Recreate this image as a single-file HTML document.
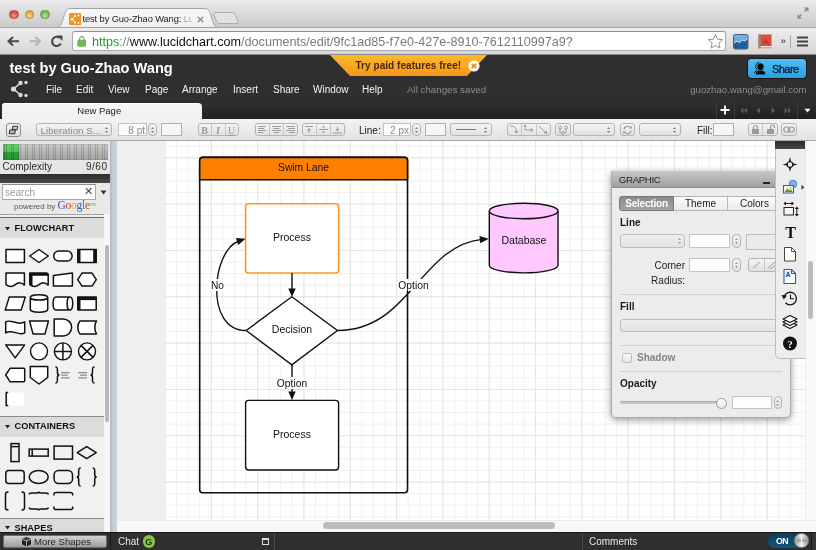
<!DOCTYPE html>
<html>
<head>
<meta charset="utf-8">
<title>test by Guo-Zhao Wang: Lucidchart</title>
<style>
html,body{margin:0;padding:0;}
body{width:816px;height:550px;overflow:hidden;position:relative;will-change:transform;background:#e9e9e9;font-family:"Liberation Sans","DejaVu Sans",sans-serif;font-size:11px;color:#222;}
.abs{position:absolute;}
div,span{box-sizing:border-box;}
/* ---------- browser chrome ---------- */
#tabstrip{left:0;top:0;width:816px;height:28px;background:linear-gradient(#ebebeb,#dddddd 40%,#c9c9c9);}
#navbar{left:0;top:27px;width:816px;height:28px;background:linear-gradient(#eeeeee,#d6d6d6);border-bottom:1px solid #8a8a8a;}
.tl{width:9.600px;height:9.600px;border-radius:5px;top:9.800px;}
#urlbox{left:72px;top:31.300px;width:653.5px;height:20.200px;background:#fff;border:1px solid #a9a9a9;border-top-color:#8f8f8f;border-radius:3px;}
#url{left:92px;top:34px;font-size:12.6px;line-height:16px;white-space:nowrap;color:#7a7a7a;letter-spacing:0px;}
/* ---------- app header ---------- */
#apphead{left:0;top:55px;width:816px;height:64px;background:#2f2f2f;}
#title{left:9.500px;top:58px;font-size:14.6px;font-weight:bold;color:#fff;white-space:nowrap;line-height:20px;}
.menu{top:82.700px;font-size:10px;color:#f2f2f2;line-height:14px;white-space:nowrap;}
#pagetab{left:2px;top:102.500px;width:200px;height:18px;background:linear-gradient(#f4f4f4,#f0f0f0);border-top:1px solid #fff;border-radius:2.500px 4px 0 0;}
#toolbar{left:0;top:119px;width:816px;height:22px;background:linear-gradient(#f3f3f3,#e3e3e3);border-bottom:1px solid #a8a8a8;}
.tb{height:13px;top:123px;border:1px solid #b4b4b4;border-radius:3px;background:linear-gradient(#f4f4f4,#e2e2e2);}
.tbw{height:13px;top:123px;border:1px solid #c4c4c4;background:#fbfbfb;}
/* ---------- left panel ---------- */
#left{left:0;top:141px;width:110px;height:392px;background:#ededed;}
.sec{left:0;width:104px;height:20px;background:#dcdcdc;border-top:1px solid #8a8a8a;font-weight:bold;font-size:9.2px;line-height:19px;color:#111;padding-left:14.5px;letter-spacing:0.05px;}
/* ---------- canvas ---------- */
#canvasbg{left:117px;top:141px;width:699px;height:392px;background:#efefef;}
#paper{left:164px;top:141px;width:641px;height:379px;background-color:#fff;
background-image:linear-gradient(90deg,#e5e5e5 1px,transparent 1px),linear-gradient(#e5e5e5 1px,transparent 1px),linear-gradient(90deg,#f0f0f0 1px,transparent 1px),linear-gradient(#f0f0f0 1px,transparent 1px);
background-size:46.34px 46.34px,46.34px 46.34px,11.585px 11.585px,11.585px 11.585px;background-position:0.5px 16.3px,0.5px 16.3px,0.5px 4.7px,0.5px 4.7px;}
/* ---------- bottom ---------- */
#bottom{left:0;top:531.500px;width:816px;height:18.500px;background:#2f2f2f;border-top:1px solid #1a1a1a;}
</style>
</head>
<body>
<!-- browser tab strip -->
<div id="tabstrip" class="abs"></div>
<div id="navbar" class="abs"></div>
<div class="abs" style="left:0;top:27px;width:816px;height:1px;background:#a8a8a8;"></div>
<div class="abs tl" style="left:9.200px;background:radial-gradient(circle at 50% 70%,#f7958a,#e4554a 55%,#c43c32);border:0.5px solid #a9463d;"></div>
<div class="abs tl" style="left:24.700px;background:radial-gradient(circle at 50% 70%,#fbd58a,#f0b040 55%,#d6962e);border:0.5px solid #b88a3a;"></div>
<div class="abs tl" style="left:40px;background:radial-gradient(circle at 50% 70%,#bfe59c,#7cc155 55%,#58a43a);border:0.5px solid #5c9444;"></div>
<svg class="abs" style="left:50px;top:0" width="210" height="28" viewBox="0 0 210 28">
  <defs><linearGradient id="tg" x1="0" y1="0" x2="0" y2="1"><stop offset="0" stop-color="#f7f7f7"/><stop offset="1" stop-color="#eeeeee"/></linearGradient></defs>
  <path d="M6 27.500 C10.500 27.500 11.500 24 13 19 C15 12 16 8.500 20.500 8.500 L154.500 8.500 C159 8.500 160 12 162 19 C163.500 24 164.500 27.500 169 27.500 Z" fill="url(#tg)" stroke="#a3a3a3" stroke-width="1"/>
  <path d="M165 12.5 L182 12.5 C184 12.5 185 13.500 185.500 15 L188 21 C188.500 22.500 188 23.500 186 23.500 L170 23.500 C168 23.500 167 22.500 166.500 21 L164 15 C163.500 13.500 163.500 12.500 165 12.500 Z" fill="#e2e2e2" stroke="#acacac" stroke-width="1"/>
</svg>
<!-- favicon -->
<svg class="abs" style="left:68.500px;top:12.500px" width="12.500" height="12.500" viewBox="0 0 13 13">
  <rect width="13" height="13" rx="1.5" fill="#f6921e"/>
  <g fill="#fff"><circle cx="3.2" cy="6.500" r="1.300"/><circle cx="6.200" cy="3.200" r="1.100"/><circle cx="6.200" cy="9.800" r="1.100"/><circle cx="9.800" cy="2.600" r="1"/><circle cx="9.800" cy="10.400" r="1"/></g>
  <path d="M3.200 6.500 L6.200 3.200 M3.200 6.500 L6.200 9.800" stroke="#fff" stroke-width="0.9"/>
</svg>
<div class="abs" style="left:82.500px;top:12.500px;font-size:9.300px;letter-spacing:-0.100px;line-height:13px;white-space:nowrap;color:#222;width:109px;overflow:hidden;">test by Guo-Zhao Wang: <span style="color:#aaa">Lu</span></div>
<svg class="abs" style="left:197px;top:15.500px" width="7" height="7" viewBox="0 0 7 7"><path d="M0.800 0.800 L6.200 6.200 M6.200 0.800 L0.800 6.200" stroke="#7a7a7a" stroke-width="1.200"/></svg>
<!-- fullscreen icon -->
<svg class="abs" style="left:796.500px;top:7px" width="12" height="12" viewBox="0 0 12 12"><path d="M7 0.500 L11.500 0.500 L11.500 5 Z M5 11.500 L0.500 11.500 L0.500 7 Z" fill="#8a8a8a"/><path d="M11 1 L7.500 4.500 M1 11 L4.500 7.500" stroke="#8a8a8a" stroke-width="1.400"/></svg>
<!-- nav buttons -->
<svg class="abs" style="left:6px;top:33px" width="62" height="17" viewBox="0 0 62 17">
  <path d="M13 8.300 L3 8.300 M7 4 L2.500 8.300 L7 12.600" stroke="#4a4a4a" stroke-width="2.100" fill="none"/>
  <path d="M23.500 8.300 L33.500 8.300 M29.500 4 L34 8.300 L29.500 12.600" stroke="#b4b4b4" stroke-width="2.100" fill="none"/>
  <path d="M53.800 5 A4.600 4.600 0 1 0 54.800 10.500" stroke="#4a4a4a" stroke-width="2.100" fill="none"/>
  <path d="M51 2.500 L56.500 2.500 L56.500 8 Z" fill="#4a4a4a"/>
</svg>
<div id="urlbox" class="abs"></div>
<!-- lock -->
<svg class="abs" style="left:76.500px;top:35px" width="9.500" height="12" viewBox="0 0 11 13"><path d="M3 6 V4 A2.500 2.500 0 0 1 8 4 V6" stroke="#8ea08a" stroke-width="1.400" fill="none"/><rect x="1" y="5.500" width="9" height="7" rx="1" fill="#6fbf4e" stroke="#4d9a34" stroke-width="0.800"/></svg>
<div id="url" class="abs"><span style="color:#1e9a2e">https</span>://<span style="color:#111">www.lucidchart.com</span>/documents/edit/9fc1ad85-f7e0-427e-8910-7612110997a9?</div>
<!-- star, extensions -->
<svg class="abs" style="left:707px;top:33px" width="17" height="17" viewBox="0 0 17 17"><path d="M8.500 1.500 L10.600 6.200 L15.700 6.700 L11.900 10.100 L13 15.100 L8.500 12.500 L4 15.100 L5.100 10.100 L1.300 6.700 L6.400 6.200 Z" fill="#fdfdfd" stroke="#858585" stroke-width="0.900" stroke-linejoin="round"/></svg>
<svg class="abs" style="left:733px;top:33.500px" width="16" height="16" viewBox="0 0 16 16"><defs><linearGradient id="bg1" x1="0" y1="0" x2="0" y2="1"><stop offset="0" stop-color="#7ab6e2"/><stop offset="1" stop-color="#4d94cc"/></linearGradient></defs><rect x="0.500" y="0.500" width="14.500" height="14.500" rx="1.800" fill="url(#bg1)" stroke="#3d4f66" stroke-width="0.900"/><path d="M1 9 L4 7 L6.500 8.500 L9.500 6 L12 7 L14.500 4.500 V13.500 Q14.500 14.500 13.500 14.500 H2 Q1 14.500 1 13.500 Z" fill="#1f5f96"/><path d="M1 9 L4 7 L6.500 8.500 L9.500 6 L12 7 L14.500 4.500" stroke="#e8f4ff" stroke-width="0.900" fill="none"/></svg>
<svg class="abs" style="left:757.500px;top:33.500px" width="14" height="16" viewBox="0 0 14 16"><rect x="0.500" y="0.500" width="13" height="12.500" fill="#e04a3c"/><rect x="0.500" y="0.500" width="2.300" height="14" fill="#8a8a8a"/><rect x="2.800" y="12" width="10.700" height="2.500" fill="#f4ece4"/><path d="M2.800 13.800 H13.500" stroke="#d84a3c" stroke-width="0.700"/><path d="M0.500 13 L2.500 15.500 L0.500 15.500 Z" fill="#f0c030"/><text x="8" y="10.500" font-size="9.500" font-weight="bold" text-anchor="middle" fill="#b8362a" font-family="Liberation Sans,sans-serif">A</text></svg>
<div class="abs" style="left:780.500px;top:34px;font-size:9.500px;line-height:14px;color:#555;font-weight:bold;">»</div>
<div class="abs" style="left:789.500px;top:35px;width:1px;height:13px;background:#aaa;"></div>
<svg class="abs" style="left:796px;top:35px" width="13" height="13" viewBox="0 0 13 13"><path d="M1 2.500 H12 M1 6.500 H12 M1 10.500 H12" stroke="#444" stroke-width="2.200"/></svg>

<!-- app header -->
<div id="apphead" class="abs"></div>
<div id="title" class="abs">test by Guo-Zhao Wang</div>
<!-- promo banner -->
<svg class="abs" style="left:326px;top:55px" width="170" height="24" viewBox="326 55 170 24">
  <defs><linearGradient id="og" x1="0" y1="0" x2="0" y2="1"><stop offset="0" stop-color="#fdb92a"/><stop offset="1" stop-color="#f7961a"/></linearGradient></defs>
  <path d="M330 55 L487 55 L467 76 L350 76 Z" fill="url(#og)"/>
  <circle cx="474" cy="66" r="5.600" fill="#fff"/>
  <path d="M471.800 63.800 L476.200 68.200 M476.200 63.800 L471.800 68.200" stroke="#f08a10" stroke-width="1.700"/>
</svg>
<div class="abs" style="left:355.500px;top:59px;font-size:10px;line-height:14px;font-weight:bold;color:#47290a;white-space:nowrap;letter-spacing:0.050px;">Try paid features free!</div>
<!-- share button -->
<div class="abs" style="left:747px;top:57.700px;width:60.200px;height:21.400px;border-radius:4px;background:linear-gradient(#50bef3,#2c9fe1);border:1px solid #161616;"></div>
<svg class="abs" style="left:752px;top:61px" width="16" height="15" viewBox="752 61 16 15"><path d="M757.300 69.500 A3.700 3.900 0 0 1 759.200 62.400" fill="none" stroke="#0a0a0a" stroke-width="0.900"/><path d="M757 70.200 L754 72.800" stroke="#0a0a0a" stroke-width="1"/><ellipse cx="760.500" cy="66.800" rx="3.100" ry="3.500" fill="#0a0a0a"/><path d="M755.800 74.600 C755.800 71.300 757.800 70.600 760.500 70.600 C763.200 70.600 765.300 71.300 765.300 74.600 Z" fill="#0a0a0a"/></svg>
<div class="abs" style="left:772px;top:61.700px;font-size:11px;line-height:14px;color:#0b2238;white-space:nowrap;letter-spacing:-0.550px;-webkit-text-stroke:0.350px #0b2238;">Share</div>
<!-- menu -->
<svg class="abs" style="left:10px;top:80px" width="19" height="18" viewBox="0 0 19 18"><g fill="#d8d8d8"><circle cx="3.500" cy="9" r="2.600"/><circle cx="10.500" cy="3" r="2.200"/><circle cx="10.500" cy="15" r="2.200"/><circle cx="16" cy="2.500" r="1.700"/><circle cx="16" cy="15.500" r="1.700"/></g><path d="M3.500 9 L10.500 3 M3.500 9 L10.500 15" stroke="#d8d8d8" stroke-width="1.600"/></svg>
<div class="abs menu" style="left:46px">File</div>
<div class="abs menu" style="left:76px">Edit</div>
<div class="abs menu" style="left:108px">View</div>
<div class="abs menu" style="left:145px">Page</div>
<div class="abs menu" style="left:182px">Arrange</div>
<div class="abs menu" style="left:233px">Insert</div>
<div class="abs menu" style="left:273px">Share</div>
<div class="abs menu" style="left:313px">Window</div>
<div class="abs menu" style="left:362px">Help</div>
<div class="abs menu" style="left:407px;color:#8d8d8d;font-size:9.750px;">All changes saved</div>
<div class="abs menu" style="right:9.500px;color:#8d8d8d;font-size:9.650px;">guozhao.wang@gmail.com</div>
<!-- page tab -->
<div class="abs" style="left:0;top:99px;width:816px;height:20.500px;background:linear-gradient(#2f2f2f,#2b2b2b 40%,#202020);"></div>
<div class="abs" style="left:715.500px;top:102px;width:1px;height:17px;background:#3c3c3c;"></div><div class="abs" style="left:734px;top:102px;width:1px;height:17px;background:#3c3c3c;"></div><div class="abs" style="left:797px;top:102px;width:1px;height:17px;background:#3c3c3c;"></div>
<div id="pagetab" class="abs"></div>
<div class="abs" style="left:0;top:104px;width:198.500px;text-align:center;font-size:9.500px;line-height:14px;color:#222;">New Page</div>
<svg class="abs" style="left:720px;top:105px" width="10" height="10" viewBox="0 0 10 10"><path d="M5 0.500 V9.500 M0.500 5 H9.500" stroke="#fff" stroke-width="1.900"/></svg>
<svg class="abs" style="left:738px;top:105px" width="78" height="11" viewBox="738 105 78 11">
  <g fill="#5c5c5c"><path d="M743.500 107.500 V113.500 L740.500 110.500 Z M747 107.500 V113.500 L744 110.500 Z"/><path d="M760 107.500 V113.500 L756.500 110.500 Z"/><path d="M771.500 107.500 V113.500 L775 110.500 Z"/><path d="M784.500 107.500 V113.500 L787.500 110.500 Z M788 107.500 V113.500 L791 110.500 Z"/></g>
  <path d="M804.500 108.800 H810.500 L807.500 112.500 Z" fill="#fff"/>
</svg>
<!-- toolbar -->
<div id="toolbar" class="abs"></div>


<!-- toolbar controls -->
<div class="abs tb" style="left:6.300px;top:123px;width:14.500px;height:13.500px;border-color:#8a8a8a;border-radius:3px;"></div>
<svg class="abs" style="left:8px;top:125px" width="11" height="10" viewBox="8 125 11 10"><path d="M12.800 126.200 H17.800 L17.200 129.800 H12.200 Z" fill="#c4c4c4" stroke="#222" stroke-width="0.900"/><path d="M9.800 129.900 H15.400 L14.800 133.800 H9.200 Z" fill="#b4b4b4" stroke="#222" stroke-width="0.900"/></svg>
<div class="abs tb" style="left:36px;width:76px;"></div>
<div class="abs" style="left:40.500px;top:123.600px;font-size:9.800px;line-height:13px;color:#8c8c8c;white-space:nowrap;">Liberation S...</div>
<svg class="abs updn" style="left:104px;top:126px" width="5" height="8" viewBox="0 0 5 8"><path d="M1 3 L2.500 1 L4 3 Z M1 5 L2.500 7 L4 5 Z" fill="#7d7d7d"/></svg>
<div class="abs tbw" style="left:118px;width:29px;"></div>
<div class="abs" style="left:118px;top:123.600px;width:27px;text-align:right;font-size:10px;line-height:13px;color:#8c8c8c;white-space:nowrap;">8 pt</div>
<div class="abs tb" style="left:148px;width:9px;border-radius:4px;"></div>
<svg class="abs" style="left:150px;top:126px" width="5" height="8" viewBox="0 0 5 8"><path d="M1 3 L2.500 1 L4 3 Z M1 5 L2.500 7 L4 5 Z" fill="#7d7d7d"/></svg>
<div class="abs tbw" style="left:161px;width:21px;background:#f6f6f6;border-color:#b0b0b0;"></div>
<div class="abs tb" style="left:197.500px;width:41px;"></div>
<div class="abs" style="left:211px;top:124px;width:1px;height:11px;background:#c4c4c4;"></div>
<div class="abs" style="left:224.500px;top:124px;width:1px;height:11px;background:#c4c4c4;"></div>
<div class="abs" style="left:197.500px;top:123.500px;width:14px;text-align:center;font-family:'Liberation Serif',serif;font-weight:bold;font-size:10px;line-height:13px;color:#9a9a9a;">B</div>
<div class="abs" style="left:211px;top:123.500px;width:14px;text-align:center;font-family:'Liberation Serif',serif;font-style:italic;font-weight:bold;font-size:10px;line-height:13px;color:#9a9a9a;">I</div>
<div class="abs" style="left:224.500px;top:123.500px;width:14px;text-align:center;font-family:'Liberation Serif',serif;font-size:10px;line-height:13px;color:#9a9a9a;text-decoration:underline;">U</div>
<div class="abs tb" style="left:255px;width:43px;"></div>
<div class="abs" style="left:269px;top:124px;width:1px;height:11px;background:#c4c4c4;"></div>
<div class="abs" style="left:283px;top:124px;width:1px;height:11px;background:#c4c4c4;"></div>
<svg class="abs" style="left:255px;top:123px" width="43" height="13" viewBox="0 0 43 13"><g stroke="#9a9a9a" stroke-width="1"><path d="M3 3.500 H11 M3 5.500 H9 M3 7.500 H11 M3 9.500 H8"/><path d="M17 3.500 H26 M18.500 5.500 H24.500 M17 7.500 H26 M19 9.500 H24"/><path d="M31 3.500 H40 M33 5.500 H40 M31 7.500 H40 M34 9.500 H40"/></g></svg>
<div class="abs tb" style="left:302px;width:43px;"></div>
<div class="abs" style="left:316px;top:124px;width:1px;height:11px;background:#c4c4c4;"></div>
<div class="abs" style="left:330px;top:124px;width:1px;height:11px;background:#c4c4c4;"></div>
<svg class="abs" style="left:302px;top:123px" width="43" height="13" viewBox="0 0 43 13"><g stroke="#9a9a9a" stroke-width="1" fill="#9a9a9a"><path d="M3 3.500 H11"/><path d="M7 5 L9 7.500 H7.500 V10 H6.500 V7.500 H5 Z" stroke="none"/><path d="M17 6.500 H26"/><path d="M21.500 2.500 L23 4.500 H20 Z M21.500 10.500 L23 8.500 H20 Z" stroke="none"/><path d="M31 10 H40"/><path d="M35.500 8.500 L37.500 6 H36 V3.500 H35 V6 H33.500 Z" stroke="none"/></g></svg>
<div class="abs" style="left:359px;top:123.600px;font-size:10px;line-height:13px;color:#222;white-space:nowrap;">Line:</div>
<div class="abs tbw" style="left:383px;width:28px;"></div>
<div class="abs" style="left:383px;top:123.600px;width:26px;text-align:right;font-size:10px;line-height:13px;color:#8c8c8c;white-space:nowrap;">2 px</div>
<div class="abs tb" style="left:412px;width:9px;border-radius:4px;"></div>
<svg class="abs" style="left:414px;top:126px" width="5" height="8" viewBox="0 0 5 8"><path d="M1 3 L2.500 1 L4 3 Z M1 5 L2.500 7 L4 5 Z" fill="#7d7d7d"/></svg>
<div class="abs tbw" style="left:425px;width:21px;background:#f6f6f6;border-color:#b0b0b0;"></div>
<div class="abs tb" style="left:450px;width:42px;"></div>
<div class="abs" style="left:456px;top:129px;width:20px;height:1px;background:#777;"></div>
<svg class="abs" style="left:483px;top:126px" width="5" height="8" viewBox="0 0 5 8"><path d="M1 3 L2.500 1 L4 3 Z M1 5 L2.500 7 L4 5 Z" fill="#7d7d7d"/></svg>
<div class="abs tb" style="left:507px;width:44px;"></div>
<div class="abs" style="left:521px;top:124px;width:1px;height:11px;background:#c4c4c4;"></div>
<div class="abs" style="left:536px;top:124px;width:1px;height:11px;background:#c4c4c4;"></div>
<svg class="abs" style="left:507px;top:123px" width="44" height="13" viewBox="0 0 44 13"><g stroke="#9a9a9a" stroke-width="1" fill="none"><path d="M3 3 C8 3 9.500 5 9.500 9.500"/><path d="M7.500 8 L9.500 10.500 L11.500 8 Z" fill="#9a9a9a" stroke="none"/><path d="M18 3 V7 H25"/><path d="M24 5 L26.500 7 L24 9 Z M16 3.500 L18 1.500 L20 3.500" fill="#9a9a9a" stroke="none"/><path d="M32 3 L39 10"/><path d="M40.500 11 L37 10.300 L39.700 7.500 Z" fill="#9a9a9a" stroke="none"/></g></svg>
<div class="abs tb" style="left:555px;width:16px;"></div>
<svg class="abs" style="left:557px;top:125px" width="12" height="10" viewBox="0 0 12 10"><g stroke="#9a9a9a" stroke-width="1" fill="none"><circle cx="3" cy="2.500" r="1.500"/><circle cx="9" cy="2.500" r="1.500"/><circle cx="6" cy="8" r="1.500"/><path d="M3 4 V8.500 M9 4 V8.500"/></g></svg>
<div class="abs tb" style="left:573px;width:42px;"></div>
<svg class="abs" style="left:606px;top:126px" width="5" height="8" viewBox="0 0 5 8"><path d="M1 3 L2.500 1 L4 3 Z M1 5 L2.500 7 L4 5 Z" fill="#7d7d7d"/></svg>
<div class="abs tb" style="left:620px;width:15px;"></div>
<svg class="abs" style="left:622px;top:125px" width="11" height="10" viewBox="0 0 11 10"><g stroke="#9a9a9a" stroke-width="1.100" fill="none"><path d="M2 4.500 A3.500 3.500 0 0 1 8.500 3"/><path d="M9 5.500 A3.500 3.500 0 0 1 2.500 7"/></g><path d="M7 3.500 L10 3.500 L9.500 0.800 Z M4 6.500 L1 6.500 L1.500 9.200 Z" fill="#9a9a9a"/></svg>
<div class="abs tb" style="left:639px;width:42px;"></div>
<svg class="abs" style="left:672px;top:126px" width="5" height="8" viewBox="0 0 5 8"><path d="M1 3 L2.500 1 L4 3 Z M1 5 L2.500 7 L4 5 Z" fill="#7d7d7d"/></svg>
<div class="abs" style="left:697px;top:123.600px;font-size:10px;line-height:13px;color:#222;white-space:nowrap;">Fill:</div>
<div class="abs tbw" style="left:713px;width:21px;background:#f6f6f6;border-color:#b0b0b0;"></div>
<div class="abs tb" style="left:748px;width:30px;"></div>
<div class="abs" style="left:762px;top:124px;width:1px;height:11px;background:#c4c4c4;"></div>
<svg class="abs" style="left:748px;top:123px" width="30" height="13" viewBox="0 0 30 13"><g fill="#9a9a9a"><rect x="4" y="6" width="7" height="5" rx="0.500"/><rect x="19" y="6" width="7" height="5" rx="0.500"/></g><g stroke="#9a9a9a" stroke-width="1.200" fill="none"><path d="M5.500 6 V4.500 A2 2 0 0 1 9.500 4.500 V6"/><path d="M22.500 6 V4 A2 2 0 0 1 26.500 4 V5"/></g></svg>
<div class="abs tb" style="left:781px;width:16px;"></div>
<svg class="abs" style="left:783px;top:126px" width="12" height="7" viewBox="0 0 12 7"><g stroke="#9a9a9a" stroke-width="1.200" fill="none"><rect x="0.800" y="1" width="6" height="5" rx="2.500"/><rect x="5.200" y="1" width="6" height="5" rx="2.500"/></g></svg>

<!-- canvas area -->
<div id="canvasbg" class="abs"></div>
<div id="paper" class="abs"></div>


<!-- diagram -->
<svg class="abs" style="left:117px;top:141px;font-family:'Liberation Sans',sans-serif;" width="699" height="392" viewBox="117 141 699 392">
  <!-- swim lane -->
  <rect x="199.700" y="157.400" width="207.800" height="335.400" rx="3" fill="none" stroke="#111" stroke-width="1.600"/>
  <path d="M199.700 179.700 V160.400 Q199.700 157.400 202.700 157.400 H404.500 Q407.500 157.400 407.500 160.400 V179.700 Z" fill="#ff8000" stroke="#111" stroke-width="1.600"/>
  <text x="303.500" y="171.300" font-size="10.300" text-anchor="middle" fill="#111">Swim Lane</text>
  <!-- process 1 -->
  <rect x="245.600" y="203.700" width="93" height="69.300" rx="3" fill="#fff" stroke="#ff9622" stroke-width="1.600"/>
  <text x="292" y="241" font-size="10.500" text-anchor="middle" fill="#111">Process</text>
  <!-- arrow p1->decision -->
  <path d="M292 273 V290" stroke="#111" stroke-width="1.400" fill="none"/>
  <path d="M288.300 288.500 L292 297 L295.700 288.500 Z" fill="#111"/>
  <!-- decision -->
  <path d="M246.200 330.500 L291.800 296.800 L337.400 330.500 L291.800 364.800 Z" fill="#fff" stroke="#111" stroke-width="1.400" stroke-linejoin="miter"/>
  <text x="292" y="333.300" font-size="10.500" text-anchor="middle" fill="#111">Decision</text>
  <!-- No curve -->
  <path d="M246.200 330.500 C204 330.500 212 250 239 241" stroke="#111" stroke-width="1.400" fill="none"/>
  <path d="M-9 -3.700 L0 0 L-9 3.700 Z" fill="#111" transform="translate(245.600 238.800) rotate(-18)"/>
  <rect x="210.500" y="279" width="14" height="12" fill="#fff"/>
  <text x="217.500" y="289" font-size="10.200" text-anchor="middle" fill="#111">No</text>
  <!-- Option curve -->
  <path d="M337.400 330.500 C410 330.500 420 246 482 239.400" stroke="#111" stroke-width="1.400" fill="none"/>
  <path d="M-9 -3.700 L0 0 L-9 3.700 Z" fill="#111" transform="translate(488.800 238.700) rotate(-6)"/>
  <rect x="399" y="279" width="29" height="12" fill="#fff"/>
  <text x="413.500" y="289" font-size="10.300" text-anchor="middle" fill="#111">Option</text>
  <!-- arrow decision->p2 -->
  <path d="M292 365 V393" stroke="#111" stroke-width="1.400" fill="none"/>
  <path d="M288.300 391.500 L292 400 L295.700 391.500 Z" fill="#111"/>
  <rect x="277" y="377" width="30" height="12" fill="#fff"/>
  <text x="292" y="387.300" font-size="10.300" text-anchor="middle" fill="#111">Option</text>
  <!-- process 2 -->
  <rect x="245.600" y="400.400" width="93" height="69.600" rx="3" fill="#fff" stroke="#111" stroke-width="1.400"/>
  <text x="292" y="437.500" font-size="10.500" text-anchor="middle" fill="#111">Process</text>
  <!-- database -->
  <path d="M489.300 211 V265.200 A34.350 7.700 0 0 0 558 265.200 V211 A34.350 7.700 0 0 0 489.300 211 Z" fill="#ffc9ff" stroke="#111" stroke-width="1.400"/>
  <path d="M489.300 211 A34.350 7.700 0 0 0 558 211" fill="none" stroke="#111" stroke-width="1.400"/>
  <text x="524" y="244" font-size="10.500" text-anchor="middle" fill="#111">Database</text>
</svg>
<!-- scrollbars -->
<div class="abs" style="left:117px;top:520px;width:699px;height:13px;background:#f7f7f7;border-top:1px solid #ebebeb;"></div>
<div class="abs" style="left:323px;top:522px;width:232px;height:7px;border-radius:4px;background:#bcbcbc;"></div>
<div class="abs" style="left:805px;top:141px;width:11px;height:379px;background:#f9f9f9;border-left:1px solid #ebebeb;"></div>
<div class="abs" style="left:808.300px;top:260.500px;width:5px;height:58px;border-radius:3px;background:#bcbcbc;"></div>


<!-- graphic panel -->
<div class="abs" style="left:610.800px;top:170.700px;width:179.800px;height:247px;background:#ececec;border:1px solid #a9a9a9;border-radius:1px 1px 5px 5px;box-shadow:0 2px 7px rgba(0,0,0,0.400);"></div>
<div class="abs" style="left:611.500px;top:171.300px;width:178.300px;height:16.700px;background:linear-gradient(#c8c8c8,#a0a0a0);border-bottom:1px solid #8a8a8a;"></div>
<div class="abs" style="left:618.800px;top:172.600px;font-size:9.700px;letter-spacing:-0.350px;line-height:14px;color:#222;">GRAPHIC</div>
<div class="abs" style="left:763px;top:182px;width:7px;height:2px;background:#222;"></div>
<div class="abs" style="left:619px;top:196px;width:163px;height:15px;border:1px solid #b4b4b4;border-radius:3px;background:linear-gradient(#fcfcfc,#ebebeb);"></div>
<div class="abs" style="left:619px;top:196px;width:55px;height:15px;border:1px solid #777;border-radius:3px 0 0 3px;background:linear-gradient(#8b8b8b,#a3a3a3);"></div>
<div class="abs" style="left:727px;top:197px;width:1px;height:13px;background:#b9b9b9;"></div>
<div class="abs" style="left:619px;top:197px;width:55px;text-align:center;font-size:10px;line-height:13px;font-weight:bold;color:#fff;letter-spacing:-0.200px;">Selection</div>
<div class="abs" style="left:674px;top:197px;width:53px;text-align:center;font-size:10px;line-height:13px;color:#222;">Theme</div>
<div class="abs" style="left:728px;top:197px;width:53px;text-align:center;font-size:10px;line-height:13px;color:#222;">Colors</div>
<div class="abs" style="left:620px;top:216px;font-size:10px;line-height:13px;font-weight:bold;color:#1a1a1a;">Line</div>
<div class="abs tb" style="left:620px;top:234px;width:65px;height:14px;background:linear-gradient(#efefef,#e2e2e2);border-color:#bdbdbd;"></div>
<svg class="abs" style="left:677px;top:237px" width="5" height="8" viewBox="0 0 5 8"><path d="M1 3 L2.500 1 L4 3 Z M1 5 L2.500 7 L4 5 Z" fill="#9a9a9a"/></svg>
<div class="abs tbw" style="left:689px;top:234px;width:41px;height:14px;background:#fdfdfd;"></div>
<div class="abs tb" style="left:732px;top:234px;width:9px;height:14px;border-radius:4px;"></div>
<svg class="abs" style="left:734px;top:237px" width="5" height="8" viewBox="0 0 5 8"><path d="M1 3 L2.500 1 L4 3 Z M1 5 L2.500 7 L4 5 Z" fill="#9a9a9a"/></svg>
<div class="abs tbw" style="left:746px;top:234px;width:36px;height:16px;background:#ebebeb;border-color:#bcbcbc;"></div>
<div class="abs" style="left:630px;top:259px;width:55px;text-align:right;font-size:10px;line-height:14.500px;color:#222;">Corner Radius:</div>
<div class="abs tbw" style="left:689px;top:258px;width:41px;height:14px;background:#fdfdfd;"></div>
<div class="abs tb" style="left:732px;top:258px;width:9px;height:14px;border-radius:4px;"></div>
<svg class="abs" style="left:734px;top:261px" width="5" height="8" viewBox="0 0 5 8"><path d="M1 3 L2.500 1 L4 3 Z M1 5 L2.500 7 L4 5 Z" fill="#9a9a9a"/></svg>
<div class="abs tb" style="left:748px;top:258px;width:34px;height:14px;"></div>
<svg class="abs" style="left:748px;top:258px" width="34" height="14" viewBox="0 0 34 14"><path d="M16.500 1 V13" stroke="#c4c4c4"/><path d="M5 10 L12 4 M20 10 L27 4 M22 11.500 L29 5.500" stroke="#9a9a9a" stroke-width="1"/></svg>
<div class="abs" style="left:620px;top:294px;width:162px;height:1px;background:#cfcfcf;"></div>
<div class="abs" style="left:620px;top:300px;font-size:10px;line-height:13px;font-weight:bold;color:#1a1a1a;">Fill</div>
<div class="abs tb" style="left:620px;top:319px;width:162px;height:13px;background:linear-gradient(#ededed,#e2e2e2);border-color:#bdbdbd;"></div>
<div class="abs" style="left:620px;top:345px;width:162px;height:1px;background:#cfcfcf;"></div>
<div class="abs" style="left:622px;top:353px;width:10px;height:10px;border:1px solid #bdbdbd;border-radius:2px;background:linear-gradient(#fafafa,#e6e6e6);"></div>
<div class="abs" style="left:637px;top:351px;font-size:10px;line-height:13px;font-weight:bold;color:#858585;">Shadow</div>
<div class="abs" style="left:620px;top:371px;width:162px;height:1px;background:#cfcfcf;"></div>
<div class="abs" style="left:620px;top:377px;font-size:10px;line-height:13px;font-weight:bold;color:#1a1a1a;">Opacity</div>
<div class="abs" style="left:620px;top:401px;width:101px;height:3px;border-radius:2px;background:#c9c9c9;border-top:1px solid #aaa;"></div>
<div class="abs" style="left:716px;top:397.500px;width:11px;height:11px;border-radius:6px;border:1px solid #9c9c9c;background:linear-gradient(#ffffff,#e9e9e9);"></div>
<div class="abs tbw" style="left:731.500px;top:396px;width:40px;height:13px;background:#fdfdfd;"></div>
<div class="abs tb" style="left:773.500px;top:396px;width:8.500px;height:13px;border-radius:4px;"></div>
<svg class="abs" style="left:775.300px;top:398.500px" width="5" height="8" viewBox="0 0 5 8"><path d="M1 3 L2.500 1 L4 3 Z M1 5 L2.500 7 L4 5 Z" fill="#9a9a9a"/></svg>

<!-- right dock -->
<div class="abs" style="left:775px;top:141px;width:30px;height:217.500px;background:#ededed;border-left:1px solid #bdbdbd;border-bottom:1px solid #bdbdbd;border-radius:0 0 0 5px;"></div>
<div class="abs" style="left:775px;top:141px;width:30px;height:7.500px;background:linear-gradient(#2c2c2c,#484848);"></div>
<svg class="abs" style="left:776px;top:149px;font-family:'Liberation Serif',serif;" width="34" height="210" viewBox="776 149 34 210">
  <!-- crosshair -->
  <g stroke="#111" fill="none" stroke-width="1.100"><circle cx="790" cy="164.500" r="2.800"/></g><path d="M790 157 L791.200 161.800 H788.800 Z M790 172 L791.200 167.200 H788.800 Z M782.500 164.500 L787.300 163.300 V165.700 Z M797.500 164.500 L792.700 163.300 V165.700 Z" fill="#111"/>
  <!-- image -->
  <circle cx="793" cy="184" r="3.800" fill="#7fb2e6" stroke="#3f6ea8" stroke-width="0.800"/>
  <rect x="783.500" y="185.500" width="10" height="7.500" fill="#f4f7ea" stroke="#2f5f9c" stroke-width="1"/>
  <path d="M784.500 192 L787.500 188.500 L789.500 190.500 L791 189 L792.500 192 Z" fill="#4c9a3a"/>
  <circle cx="790.500" cy="187.800" r="0.900" fill="#e8b020"/>
  <path d="M801.500 184.800 V189.800 L804.300 187.300 Z" fill="#333"/>
  <!-- resize -->
  <g stroke="#222" fill="none" stroke-width="1"><rect x="784" y="207.500" width="9.500" height="7.500" fill="#f8f8f8"/><path d="M784.500 203.500 H793 M796.800 208 V215"/></g>
  <path d="M783.500 203.500 L786 201.500 V205.500 Z M794 203.500 L791.500 201.500 V205.500 Z M796.800 206.500 L794.800 209 H798.800 Z M796.800 216.500 L794.800 214 H798.800 Z" fill="#111"/>
  <!-- T -->
  <text x="790.500" y="237.500" font-size="16" font-weight="bold" text-anchor="middle" fill="#111">T</text>
  <!-- page -->
  <path d="M784.500 247.500 H791.500 L795.500 251.500 V261 H784.500 Z" fill="#fff" stroke="#444" stroke-width="1" stroke-linejoin="round"/>
  <path d="M791.500 247.500 V251.500 H795.500" fill="none" stroke="#444" stroke-width="0.900"/>
  <!-- doc A -->
  <path d="M784 269.500 H791.500 L795.500 273.500 V283.500 H784 Z" fill="#fff" stroke="#2a5aa8" stroke-width="1.100" stroke-linejoin="round"/>
  <path d="M791.500 269.500 V273.500 H795.500" fill="none" stroke="#2a5aa8" stroke-width="1"/>
  <rect x="785" y="271" width="6" height="6" fill="#d7e6f7"/>
  <text x="788" y="276.800" font-size="6.500" font-weight="bold" text-anchor="middle" fill="#1c3f7c" font-family="Liberation Sans,sans-serif">A</text>
  <!-- history -->
  <g stroke="#111" fill="none" stroke-width="1.300"><path d="M784.200 296.500 A6.300 6.300 0 1 1 785.500 302.800"/><path d="M790.500 294.500 V298.800 H794" stroke-width="1.100"/></g>
  <path d="M781.500 295 L787 295.500 L783.800 299.500 Z" fill="#111"/>
  <!-- layers -->
  <g stroke="#111" fill="#fff" stroke-width="1.100" stroke-linejoin="round"><path d="M783 325 L790 328.500 L797 325 L790 321.500 Z"/><path d="M783 322 L790 325.500 L797 322 L790 318.500 Z"/><path d="M783 319 L790 322.500 L797 319 L790 315.500 Z"/></g>
  <!-- help -->
  <circle cx="790" cy="343.500" r="7" fill="#111"/>
  <text x="790" y="347.500" font-size="10.500" font-weight="bold" text-anchor="middle" fill="#fff">?</text>
</svg>

<!-- left panel -->
<div id="left" class="abs"></div>
<!-- left panel contents -->
<div class="abs" style="left:0;top:141px;width:110px;height:33px;background:#e6e6e6;"></div>
<div class="abs" style="left:2.500px;top:143.500px;width:105px;height:16.200px;background:linear-gradient(#cdcdcd,#b4b4b4 50%,#a6a6a6);"></div>
<div class="abs" style="left:2.500px;top:143.500px;width:16.200px;height:16.200px;background:linear-gradient(#6bd070 0,#55c05e 50%,#2f9e3c 50%,#2a9436 100%);"></div>
<div class="abs" style="left:2.500px;top:143.500px;width:105px;height:16.200px;background:repeating-linear-gradient(90deg,rgba(0,0,0,0) 0,rgba(0,0,0,0) 1.250px,rgba(0,0,0,0.160) 1.250px,rgba(0,0,0,0.160) 1.750px);box-shadow:inset 0 0 0 0.500px rgba(0,0,0,0.200);"></div>
<div class="abs" style="left:2.500px;top:159.700px;font-size:10px;line-height:13px;color:#2a2a2a;">Complexity</div>
<div class="abs" style="left:60px;top:159.700px;width:47.500px;text-align:right;font-size:10px;line-height:13px;color:#2a2a2a;letter-spacing:0.500px;">9/60</div>
<div class="abs" style="left:0;top:174px;width:110px;height:9px;background:linear-gradient(#2c2c2c,#4a4a4a);"></div>
<div class="abs" style="left:0;top:183px;width:110px;height:31px;background:#e9e9e9;"></div>
<div class="abs" style="left:2px;top:184px;width:94px;height:16px;background:#fff;border:1px solid #a6a6a6;border-top-color:#8c8c8c;"></div>
<div class="abs" style="left:5px;top:187px;font-size:10px;line-height:12px;color:#999;">search</div>
<div class="abs" style="left:84px;top:185px;font-size:11px;line-height:13px;color:#444;">✕</div>
<svg class="abs" style="left:100px;top:190px" width="7" height="5" viewBox="0 0 7 5"><path d="M0.500 0.500 H6.500 L3.500 4.500 Z" fill="#333"/></svg>
<div class="abs" style="left:14px;top:199px;font-size:8px;line-height:12px;color:#555;white-space:nowrap;">powered by <span style="font-family:'Liberation Serif',serif;font-size:11.500px;letter-spacing:-0.300px;"><span style="color:#2a55c9">G</span><span style="color:#d03a2a">o</span><span style="color:#e2a814">o</span><span style="color:#2a55c9">g</span><span style="color:#2f9a3e">l</span><span style="color:#d03a2a">e</span></span><span style="font-size:4px;vertical-align:top;color:#777">TM</span></div>
<div class="abs" style="left:0;top:214px;width:110px;height:319px;background:#f1f1f1;"></div>
<div class="abs" style="left:0;top:214.300px;width:110px;height:1px;background:#a4a4a4;"></div>
<div class="abs sec" style="top:217.400px;height:21px;line-height:21px;border-top-color:#6a6a6a;">FLOWCHART</div>
<svg class="abs" style="left:5px;top:227px" width="5" height="3.500" viewBox="0 0 6 4"><path d="M0 0 H6 L3 4 Z" fill="#222"/></svg>
<div class="abs sec" style="top:416.300px;height:20.500px;">CONTAINERS</div>
<svg class="abs" style="left:5px;top:425px" width="5" height="3.500" viewBox="0 0 6 4"><path d="M0 0 H6 L3 4 Z" fill="#222"/></svg>
<div class="abs sec" style="top:517.500px;height:15px;">SHAPES</div>
<svg class="abs" style="left:5px;top:526px" width="5" height="3.500" viewBox="0 0 6 4"><path d="M0 0 H6 L3 4 Z" fill="#222"/></svg>
<div class="abs" style="left:104px;top:214px;width:6px;height:319px;background:#f7f7f7;"></div>
<div class="abs" style="left:104.500px;top:245px;width:4.500px;height:177px;background:#b9b9b9;border-radius:2px;"></div>
<div class="abs" style="left:110px;top:141px;width:7px;height:392px;background:linear-gradient(90deg,#aeb5c4,#c6ccd8 40%,#cdd2dc);"></div>
<svg class="abs" style="left:0;top:141px" width="104" height="392" viewBox="0 0 104 392">
<g transform="translate(15.2 115)"><rect x="-9.200" y="-6.500" width="18.400" height="13" fill="#fff" stroke="#111" stroke-width="1.500" stroke-linejoin="round"/></g>
<g transform="translate(39 115)"><path d="M-9.300 0 L0 -6.500 L9.300 0 L0 6.500 Z" fill="#fff" stroke="#111" stroke-width="1.500" stroke-linejoin="round"/></g>
<g transform="translate(62.9 115)"><rect x="-9.200" y="-5" width="18.400" height="10" rx="5" fill="#fff" stroke="#111" stroke-width="1.500" stroke-linejoin="round"/></g>
<g transform="translate(87 115)"><rect x="-9.200" y="-6.500" width="18.400" height="13" fill="#fff" stroke="#111" stroke-width="1.500" stroke-linejoin="round"/><rect x="-9.5" y="-6.500" width="3" height="13" fill="#111"/><rect x="6.200" y="-6.500" width="3" height="13" fill="#111"/></g>
<g transform="translate(15.2 138.60000000000002)"><path d="M-9.200 -6.500 H9.200 V5.500 C6 2.500 3 2.500 0 5 C-3 7.500 -6 7.500 -9.200 5 Z" fill="#fff" stroke="#111" stroke-width="1.500" stroke-linejoin="round"/></g>
<g transform="translate(39 138.60000000000002)"><path d="M-9.200 -6.500 H7.200 Q9.200 -6.500 9.200 -4.500 V5.500 C6 2.500 3 2.500 0 5 C-3 7.500 -6 7.500 -9.200 5 Z" fill="#fff" stroke="#111" stroke-width="1.500" stroke-linejoin="round"/><path d="M-9.200 -6.500 H7.200 Q9.200 -6.500 9.200 -4.500 V-3.800 H-6.500 V6.800 L-9.200 5 Z" fill="#111"/></g>
<g transform="translate(62.9 138.60000000000002)"><path d="M-9.500 -4 L9.500 -6.500 V6.500 H-9.500 Z" fill="#fff" stroke="#111" stroke-width="1.500" stroke-linejoin="round"/></g>
<g transform="translate(87 138.60000000000002)"><path d="M-9.300 0 L-5 -6.500 H5 L9.300 0 L5 6.500 H-5 Z" fill="#fff" stroke="#111" stroke-width="1.500" stroke-linejoin="round"/></g>
<g transform="translate(15.2 162.60000000000002)"><path d="M-6 -6.500 H10 L6 6.500 H-10 Z" fill="#fff" stroke="#111" stroke-width="1.500" stroke-linejoin="round"/></g>
<g transform="translate(39 162.60000000000002)"><path d="M-8.700 -6.200 V6 A8.700 2.600 0 0 0 8.700 6 V-6.200 A8.700 2.600 0 0 0 -8.700 -6.200 A8.700 2.600 0 0 0 8.700 -6.200" fill="#fff" stroke="#111" stroke-width="1.500" stroke-linejoin="round"/></g>
<g transform="translate(62.9 162.60000000000002)"><path d="M-7 -6.500 H7 A2.800 6.500 0 0 1 7 6.500 H-7 A2.800 6.500 0 0 1 -7 -6.500 Z M7 -6.500 A2.800 6.500 0 0 0 7 6.500" fill="#fff" stroke="#111" stroke-width="1.500" stroke-linejoin="round"/></g>
<g transform="translate(87 162.60000000000002)"><rect x="-9.200" y="-6.500" width="18.400" height="13" fill="#fff" stroke="#111" stroke-width="1.500" stroke-linejoin="round"/><rect x="-9.200" y="-6.500" width="18.400" height="3" fill="#111"/><rect x="-9.500" y="-6.500" width="3" height="13" fill="#111"/></g>
<g transform="translate(15.2 186.39999999999998)"><path d="M-9.500 -5.500 C-4 -9 2 -1 9.500 -5.500 V5.500 C3 9 -3 1 -9.500 5.500 Z" fill="#fff" stroke="#111" stroke-width="1.500" stroke-linejoin="round"/></g>
<g transform="translate(39 186.39999999999998)"><path d="M-9.500 -6.500 H9.500 L6 6.500 H-6 Z" fill="#fff" stroke="#111" stroke-width="1.500" stroke-linejoin="round"/></g>
<g transform="translate(62.9 186.39999999999998)"><path d="M-8.700 -8.500 H0.200 A8.500 8.500 0 0 1 0.200 8.500 H-8.700 Z" fill="#fff" stroke="#111" stroke-width="1.500" stroke-linejoin="round"/></g>
<g transform="translate(87 186.39999999999998)"><path d="M-7 -6.500 H9.500 C7.300 -3 7.300 3 9.500 6.500 H-7 C-10 3 -10 -3 -7 -6.500 Z" fill="#fff" stroke="#111" stroke-width="1.500" stroke-linejoin="round"/></g>
<g transform="translate(15.2 210.39999999999998)"><path d="M-9.500 -6.500 H9.500 L0 6.500 Z" fill="#fff" stroke="#111" stroke-width="1.500" stroke-linejoin="round"/></g>
<g transform="translate(39 210.39999999999998)"><circle r="8.500" fill="#fff" stroke="#111" stroke-width="1.400"/></g>
<g transform="translate(62.9 210.39999999999998)"><circle r="8.500" fill="#fff" stroke="#111" stroke-width="1.400"/><path d="M-8.500 0 H8.500 M0 -8.500 V8.500" stroke="#111" stroke-width="1.500"/></g>
<g transform="translate(87 210.39999999999998)"><circle r="8.500" fill="#fff" stroke="#111" stroke-width="1.400"/><path d="M-6 -6 L6 6 M6 -6 L-6 6" stroke="#111" stroke-width="1.500"/></g>
<g transform="translate(15.2 234)"><path d="M-9.500 0 L-5 -6.800 H8.500 Q9.500 -6.800 9.500 -5.800 V5.800 Q9.500 6.800 8.500 6.800 H-5 Z" fill="#fff" stroke="#111" stroke-width="1.500" stroke-linejoin="round"/></g>
<g transform="translate(39 234)"><path d="M-8.700 -8.500 H8.700 V2.500 L0 9 L-8.700 2.500 Z" fill="#fff" stroke="#111" stroke-width="1.500" stroke-linejoin="round"/></g>
<g transform="translate(62.9 234)"><path d="M-7.500 -8 C-5.500 -8 -5.500 -7 -5.500 -5 V-2.500 C-5.500 -0.500 -4.500 0 -3.500 0 C-4.500 0 -5.500 0.500 -5.500 2.500 V5 C-5.500 7 -5.500 8 -7.500 8" fill="none" stroke="#111" stroke-width="1.500"/><path d="M-1.800 -2.400 H6.800 M-1.800 0.200 H5 M-1.800 2.800 H6.800" stroke="#8a8a8a" stroke-width="1.200"/></g>
<g transform="translate(87 234)"><path d="M7.500 -8 C5.500 -8 5.500 -7 5.500 -5 V-2.500 C5.500 -0.500 4.500 0 3.500 0 C4.500 0 5.500 0.500 5.500 2.500 V5 C5.500 7 5.500 8 7.500 8" fill="none" stroke="#111" stroke-width="1.500"/><path d="M-8.800 -2.400 H0 M-7 0.200 H0 M-8.800 2.800 H0" stroke="#8a8a8a" stroke-width="1.200"/></g>
<g transform="translate(15.2 258)"><rect x="-7.500" y="-6.500" width="16" height="13" fill="#fff"/><path d="M-7 -6.500 H-9 V6.500 H-7" fill="none" stroke="#111" stroke-width="1.500"/></g>
<g transform="translate(15 311.6)"><rect x="-4" y="-9" width="8" height="18" fill="none" stroke="#111" stroke-width="1.500"/><path d="M-4 -6 H4" stroke="#111" stroke-width="1.500"/></g>
<g transform="translate(38.7 311.6)"><rect x="-9.500" y="-3.500" width="19" height="7" fill="none" stroke="#111" stroke-width="1.500"/><path d="M-6.500 -3.500 V3.500" stroke="#111" stroke-width="1.500"/></g>
<g transform="translate(63.3 311.6)"><rect x="-9.200" y="-6.500" width="18.400" height="13" fill="none" stroke="#111" stroke-width="1.500"/></g>
<g transform="translate(86.7 311.6)"><path d="M-9.500 0 L0 -6 L9.500 0 L0 6 Z" fill="none" stroke="#111" stroke-width="1.500" stroke-linejoin="round"/></g>
<g transform="translate(15 336)"><rect x="-9.200" y="-6.500" width="18.400" height="13" rx="3" fill="none" stroke="#111" stroke-width="1.500"/></g>
<g transform="translate(38.7 336)"><ellipse rx="9.500" ry="6.500" fill="none" stroke="#111" stroke-width="1.500"/></g>
<g transform="translate(63.3 336)"><rect x="-9.200" y="-6.500" width="18.400" height="13" rx="4.500" fill="none" stroke="#111" stroke-width="1.500"/></g>
<g transform="translate(86.7 336)"><path d="M-6 -9 C-8 -9 -8 -8 -8 -6 V-2.500 C-8 -0.500 -9 0 -10 0 C-9 0 -8 0.500 -8 2.500 V6 C-8 8 -8 9 -6 9 M6 -9 C8 -9 8 -8 8 -6 V-2.500 C8 -0.500 9 0 10 0 C9 0 8 0.500 8 2.500 V6 C8 8 8 9 6 9" fill="none" stroke="#111" stroke-width="1.500"/></g>
<g transform="translate(15 360)"><path d="M-6.500 -9 C-9.500 -9 -9.500 -8 -9.500 -6 V6 C-9.500 8 -9.500 9 -6.500 9 M6.500 -9 C9.500 -9 9.500 -8 9.500 -6 V6 C9.500 8 9.500 9 6.500 9" fill="none" stroke="#111" stroke-width="1.500"/></g>
<g transform="translate(38.7 360)"><path d="M-9.500 -6.500 C-9.500 -8 -8.500 -8 -7 -8 H-2 C-1 -8 0 -8.500 0 -9.500 C0 -8.500 1 -8 2 -8 H7 C8.500 -8 9.500 -8 9.500 -6.500 M-9.500 6.500 C-9.500 8 -8.500 8 -7 8 H-2 C-1 8 0 8.500 0 9.500 C0 8.500 1 8 2 8 H7 C8.500 8 9.500 8 9.500 6.500" fill="none" stroke="#111" stroke-width="1.500"/></g>
<g transform="translate(63.3 360)"><path d="M-9.500 -5.500 C-9.500 -8.500 -8.500 -8.500 -6.500 -8.500 H6.500 C8.500 -8.500 9.500 -8.500 9.500 -5.500 M-9.500 5.500 C-9.500 8.500 -8.500 8.500 -6.500 8.500 H6.500 C8.500 8.500 9.500 8.500 9.500 5.500" fill="none" stroke="#111" stroke-width="1.500"/></g>
</svg>


<!-- bottom bar -->
<div id="bottom" class="abs"></div>
<!-- bottom bar contents -->
<div class="abs" style="left:811px;top:533px;width:1px;height:17px;background:#191919;"></div><div class="abs" style="left:812px;top:533px;width:4px;height:17px;background:#363636;"></div>
<div class="abs" style="left:3px;top:535px;width:104px;height:13px;border-radius:2px;background:linear-gradient(#d2d2d2,#9e9e9e);border:1px solid #6c6c6c;"></div>
<svg class="abs" style="left:21px;top:536px" width="11" height="11" viewBox="0 0 11 11"><path d="M5.500 0.800 L10 2.800 L5.500 4.800 L1 2.800 Z" fill="#444"/><path d="M1 3.600 L5 5.500 V10.300 L1 8.300 Z M10 3.600 L6 5.500 V10.300 L10 8.300 Z" fill="#222"/></svg>
<div class="abs" style="left:34px;top:535px;font-size:9.600px;line-height:13px;color:#262626;white-space:nowrap;">More Shapes</div>
<div class="abs" style="left:110px;top:533px;width:1px;height:17px;background:#1a1a1a;"></div>
<div class="abs" style="left:118px;top:535px;font-size:10px;line-height:13px;color:#e8e8e8;">Chat</div>
<div class="abs" style="left:142.500px;top:535px;width:12.500px;height:12.500px;border-radius:7px;background:#86c440;"></div>
<div class="abs" style="left:142.500px;top:535.500px;width:12.500px;text-align:center;font-size:9px;line-height:12px;font-weight:bold;color:#16300a;">G</div>
<div class="abs" style="left:262px;top:538px;width:7px;height:7px;border:1px solid #e0e0e0;border-top-width:2px;"></div>
<div class="abs" style="left:274px;top:533px;width:1px;height:17px;background:#4a4a4a;"></div>
<div class="abs" style="left:582px;top:533px;width:1px;height:17px;background:#4a4a4a;"></div>
<div class="abs" style="left:589px;top:535px;font-size:10px;line-height:13px;color:#e8e8e8;">Comments</div>
<div class="abs" style="left:767.500px;top:533.800px;width:41.600px;height:14.200px;border-radius:7px;background:linear-gradient(#0d3f60,#13537a);"></div>
<div class="abs" style="left:776px;top:534.800px;font-size:8.800px;line-height:12px;font-weight:bold;color:#fff;letter-spacing:-0.600px;">ON</div>
<div class="abs" style="left:794px;top:533.300px;width:15px;height:15px;border-radius:7.500px;background:conic-gradient(#f2f2f2,#9a9a9a,#f2f2f2,#9a9a9a,#f2f2f2);border:0.5px solid #888;"></div>

</body>
</html>
